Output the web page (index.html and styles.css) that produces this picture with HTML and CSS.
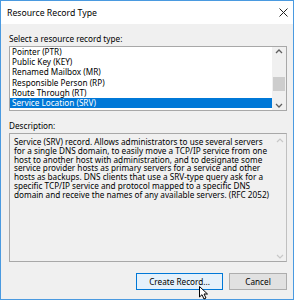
FILE: index.html
```html
<!DOCTYPE html>
<html>
<head>
<meta charset="utf-8">
<link rel="stylesheet" href="styles.css">
</head>
<body>
<div class="window">
  <div class="titlebar">
    <span class="title">Resource Record Type</span>
    <svg class="close" width="9" height="9" viewBox="0 0 9 9"><path d="M0.5 0.5 L8.5 8.5 M8.5 0.5 L0.5 8.5" stroke="#222" stroke-width="1"/></svg>
  </div>
  <div class="content">
    <div class="label">Select a resource record type:</div>
    <div class="listbox">
      <div class="items">
        <div class="item">Pointer (PTR)</div>
        <div class="item">Public Key (KEY)</div>
        <div class="item">Renamed Mailbox (MR)</div>
        <div class="item">Responsible Person (RP)</div>
        <div class="item">Route Through (RT)</div>
        <div class="item selected">Service Location (SRV)</div>
      </div>
      <div class="scrollbar">
        <svg class="arrow" width="14" height="10" viewBox="0 0 14 10"><path d="M4 6 L7 3 L10 6" fill="none" stroke="#606060" stroke-width="1.3"/></svg>
        <div class="track"><div class="thumb"></div></div>
        <svg class="arrow" width="14" height="10" viewBox="0 0 14 10"><path d="M4 4 L7 7 L10 4" fill="none" stroke="#606060" stroke-width="1.3"/></svg>
      </div>
    </div>
    <div class="label desc-label">Description:</div>
    <div class="descbox">
      <div class="desctext">
        <div class="line">Service (SRV) record. Allows administrators to use several servers</div>
        <div class="line">for a single DNS domain, to easily move a TCP/IP service from one</div>
        <div class="line">host to another host with administration, and to designate some</div>
        <div class="line">service provider hosts as primary servers for a service and other</div>
        <div class="line">hosts as backups. DNS clients that use a SRV-type query ask for a</div>
        <div class="line">specific TCP/IP service and protocol mapped to a specific DNS</div>
        <div class="line">domain and receive the names of any available servers. (RFC 2052)</div>
      </div>
      <div class="scrollbar light">
        <svg class="arrow" width="12" height="10" viewBox="0 0 12 10"><path d="M3 6 L6 3 L9 6" fill="none" stroke="#c8c8c8" stroke-width="1.2"/></svg>
        <div class="track"></div>
        <svg class="arrow" width="12" height="10" viewBox="0 0 12 10"><path d="M3 4 L6 7 L9 4" fill="none" stroke="#c8c8c8" stroke-width="1.2"/></svg>
      </div>
    </div>
    <div class="buttons">
      <div class="btn default">Create Record...</div>
      <div class="btn">Cancel</div>
    </div>
  </div>
  <svg class="cursor" width="12" height="14" viewBox="0 0 12 14"><path d="M0.5 0.5 L0.5 11 L3 8.7 L5 13 L7 12 L5 8 L8.5 8 Z" fill="#fff" stroke="#000" stroke-width="1" stroke-linejoin="miter"/></svg>
</div>
</body>
</html>
```
FILE: styles.css
```css
html, body {
  margin: 0;
  padding: 0;
  background: #ffffff;
}
body {
  width: 295px;
  height: 300px;
  overflow: hidden;
  font-family: "Noto Sans", "Open Sans", sans-serif;
  font-size: 8.2px;
  color: #000;
}
.window {
  position: relative;
  box-sizing: border-box;
  width: 294px;
  height: 300px;
  border: 1px solid #4a9ae0;
  background: #f0f0f0;
  display: flex;
  flex-direction: column;
}
.titlebar {
  height: 23px;
  background: #ffffff;
  display: flex;
  align-items: center;
  justify-content: space-between;
  padding: 0 5px 0 6px;
  flex-shrink: 0;
}
.title {
  font-size: 8.7px;
  line-height: 12px;
  color: #000;
}
.close {
  display: block;
}
.content {
  flex: 1;
  padding: 8px 6px 0 8px;
  display: flex;
  flex-direction: column;
}
.label {
  height: 13px;
  line-height: 13px;
}
.listbox {
  margin-top: 1px;
  height: 65px;
  box-sizing: border-box;
  border: 1px solid #a8a8a8;
  background: #fff;
  display: flex;
  flex-shrink: 0;
}
.items {
  flex: 1;
}
.item {
  height: 10.2px;
  line-height: 10.2px;
  padding-left: 2px;
  white-space: nowrap;
}
.item.selected {
  background: #0078d7;
  color: #fff;
}
.scrollbar {
  width: 14px;
  background: #f0f0f0;
  display: flex;
  flex-direction: column;
}
.scrollbar .arrow {
  display: block;
  flex-shrink: 0;
}
.track {
  flex: 1;
  position: relative;
}
.thumb {
  position: absolute;
  left: 1px;
  right: 1px;
  top: 20px;
  height: 14px;
  background: #cdcdcd;
}
.desc-label {
  margin-top: 8px;
}
.descbox {
  margin-top: 1px;
  height: 129px;
  box-sizing: border-box;
  border: 1px solid #a8a8a8;
  border-right-color: #c0c0c0;
  background: #f0f0f0;
  display: flex;
  flex-shrink: 0;
}
.desctext {
  flex: 1;
  padding: 4px 0 0 4px;
  font-size: 8.2px;
}
.line {
  height: 8.8px;
  line-height: 8.8px;
  white-space: nowrap;
}
.scrollbar.light {
  width: 12px;
  padding-top: 2px;
}
.buttons {
  margin-top: 11px;
  display: flex;
  justify-content: flex-end;
  gap: 6px;
}
.btn {
  box-sizing: border-box;
  height: 17px;
  line-height: 15px;
  text-align: center;
  border: 1px solid #adadad;
  background: #e1e1e1;
  width: 58px;
}
.btn.default {
  width: 87px;
  border-color: #0078d7;
  background: #e5f1fb;
}
.cursor {
  position: absolute;
  left: 198px;
  top: 285px;
}
```
